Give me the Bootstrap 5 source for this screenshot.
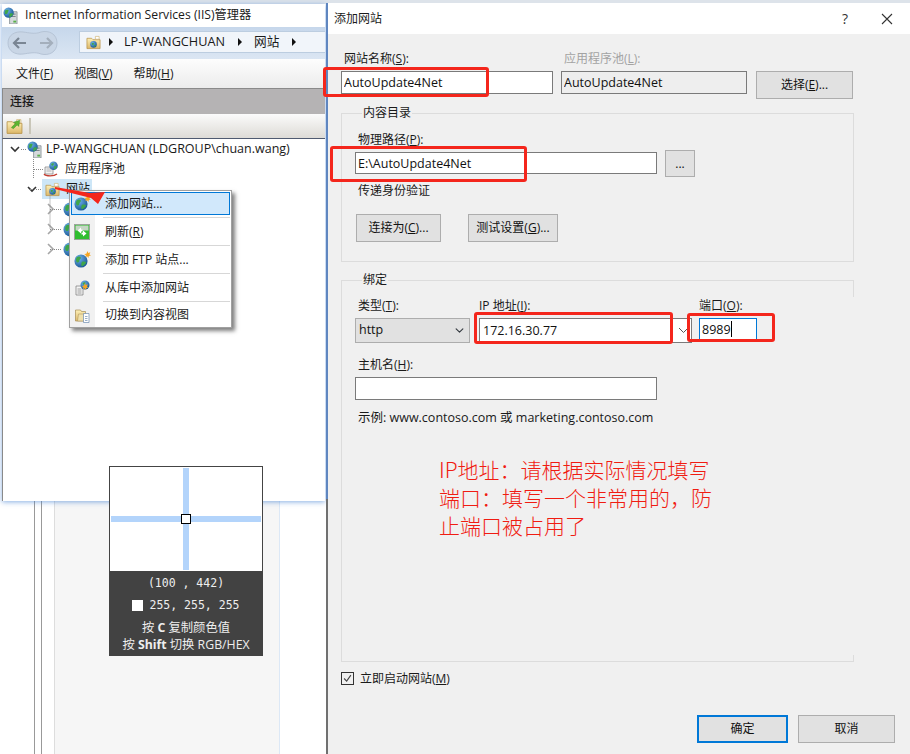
<!DOCTYPE html>
<html lang="zh-CN">
<head>
  <meta charset="UTF-8">
  <title>添加网站</title>
  <link href="https://cdn.jsdelivr.net/npm/bootstrap@5.3.0/dist/css/bootstrap.min.css" rel="stylesheet">
  <style>
    html, body { margin: 0; width: 910px; height: 754px; overflow: hidden; }
    body { font-family: "Open Sans", "Noto Sans CJK SC", sans-serif; font-size: 12px; color: #1a1a1a; background: #fff; }
    .desk { position: relative; width: 910px; height: 754px; overflow: hidden; }
    u { text-underline-offset: 1px; }
    .latin-run { font-size: 12.5px; }

    /* what shows behind the two windows */
    .back-layer { position: absolute; inset: 0; background: #fff; }
    .back-top { height: 4px; background: #dde3ea; }
    .back-col-a { width: 34px; }
    .back-col-b { width: 7px; border-left: 1px solid #999; }
    .back-col-c { width: 13px; border-left: 1px solid #999; }
    .back-col-d { width: 226px; background: #f6f6f6; border-left: 1px solid #ddd; border-right: 1px solid #dce8f6; }
    .back-col-e { flex: 1; background: linear-gradient(90deg, #fff 60%, #e4e4e4 92%, #999); }

    /* IIS manager */
    .iis-win { position: absolute; left: 2px; top: 4px; width: 323px; height: 497px; background: #fff; box-shadow: 0 1px 5px rgba(70,130,210,.65); }
    .iis-title { height: 23px; padding-left: 1px; gap: 7px; font-size: 12.2px; }
    .iis-nav { height: 32px; background: linear-gradient(#c6d7eb, #dbe6f3); padding-left: 3px; }
    .crumb-box { margin-left: 19px; flex: 1; height: 22px; margin-top: -2px; background: #f1f5fa; border: 1px solid #bccde0; border-right: 0; padding-left: 6px; font-size: 12.7px; }
    .crumb-sep { width: 0; height: 0; border-left: 4px solid #111; border-top: 4px solid transparent; border-bottom: 4px solid transparent; margin: 0 12px 0 13px; }
    .crumb-sep.is-first { margin: 0 11px 0 8px; }
    .iis-menu { height: 29px; background: linear-gradient(#fdfdfd, #ececec); padding-left: 14px; gap: 21px; }
    .conn-head { height: 26px; background: #b5b3b4; padding-left: 7px; font-weight: 500; border-top: 1px solid #8a8a8a; border-left: 1px solid #8a8a8a; }
    .conn-tools { height: 25px; padding-left: 3px; background: linear-gradient(#fbfbfb, #dddbd6); border-bottom: 1px solid #4f5a70; gap: 6px; border-left: 1px solid #8a8a8a; }
    .tool-bar-line { width: 2px; height: 16px; background: #c9c6b8; }
    .tree-pane { position: relative; flex: 1; border-left: 1px solid #8a8a8a; }
    .tree-row { height: 20px; }
    .tree-chev { width: 12px; flex: none; }
    .tree-lv0 { padding-left: 6px; }
    .tree-lv1 { padding-left: 40px; }
    .tree-lv1b { padding-left: 23px; }
    .tree-lv2 { padding-left: 42px; }
    .tree-sel { background: #cde6f7; width: 50px; height: 20px; margin-left: 4px; padding-left: 3px; }
    .tree-dots { position: absolute; left: 0; top: 0; pointer-events: none; }
    .icon-gap { margin-left: 6px; }
    .text-gap { margin-left: 6px; }

    /* context menu */
    .ctx-menu { position: absolute; left: 69px; top: 190px; width: 163px; height: 138px; background: linear-gradient(90deg, #f1f1f1 25px, #fff 25px); border: 1px solid #a0a0a0; box-shadow: 3px 3px 4px rgba(0,0,0,.5); padding: 1px; }
    .ctx-row { height: 27px; padding-left: 3px; gap: 14px; }
    .ctx-row:last-child { height: 25px; }
    .ctx-row.is-hot { height: 23px; background: #d1e8fb; border: 1px solid #0078d7; padding-left: 2px; margin-bottom: 2px; }
    .ctx-rule { height: 1px; background: #d7d7d7; margin-left: 32px; }
    .ctx-icon { width: 17px; flex: none; }
    .red-arrow { position: absolute; left: 0; top: 0; pointer-events: none; }

    /* colour picker loupe */
    .loupe { position: absolute; left: 109px; top: 466px; width: 154px; height: 190px; }
    .loupe-view { position: relative; height: 105px; background: #fff; border: 1px solid #444; border-bottom: 0; }
    .loupe-v { position: absolute; left: 73px; top: 1px; width: 6px; height: 102px; background: #b3d4fb; }
    .loupe-h { position: absolute; left: 1px; top: 49px; width: 150px; height: 6px; background: #b3d4fb; }
    .loupe-c { position: absolute; left: 71px; top: 47px; width: 10px; height: 10px; background: #fff; border: 1px solid #000; }
    .loupe-info { height: 85px; background: #424242; color: #eee; font-size: 12.3px; text-align: center; padding-top: 4px; }
    .loupe-mono { font-family: "DejaVu Sans Mono", monospace; font-size: 11.5px; height: 22px; line-height: 16px; }
    .loupe-swatch { width: 11px; height: 11px; background: #fff; margin: 3px 6px 0 0; }
    .loupe-hint { height: 17px; line-height: 17px; }

    /* add site dialog */
    .site-dlg { position: absolute; left: 326px; top: 3px; width: 584px; height: 751px; background: #f0f0f0; border-left: 2px solid; border-image: linear-gradient(#5f86c0 66%, #707070 66%) 1; }
    .dlg-head { height: 31px; background: #fff; padding: 0 17px 0 6px; }
    .dlg-help { font-size: 14px; margin-right: 33px; color: #333; }
    .dlg-pane { flex: 1; padding: 16px 15px 11px 13px; }
    .fld-label { height: 21px; line-height: 18px; padding-left: 3px; white-space: nowrap; }
    .is-muted { color: #a3a3a3; }
    .win-input.form-control { height: 23px; border-radius: 0; border: 1px solid #7a7a7a; padding: 0 2px; font-size: 12.5px; color: #111; background: #fff; box-shadow: none; }
    .win-input.is-grey.form-control { background: #eee; }
    .win-btn.btn { height: 28px; border-radius: 0; border: 1px solid #adadad; background: #e1e1e1; color: #111; font-size: 12px; padding: 0; line-height: 26px; }
    .w-name { width: 212px; }
    .w-pool { width: 186px; margin-left: 8px; }
    .w-pick { width: 97px; margin: 21px 0 0 9px; }
    .grp-box { position: relative; width: 513px; border: 1px solid #dcdcdc; padding: 9px 0 19px 13px; margin: 5px 0 0 0; min-width: 0; }
    .grp-box legend { float: none; width: auto; font-size: 12px; line-height: 18px; margin: 0 0 0 7px; padding: 0 1px; }
    .grp-bind { height: 391px; margin-top: 9px; padding: 8px 0 0 13px; border-right: 0; background-image: linear-gradient(#dcdcdc, #dcdcdc), linear-gradient(#dcdcdc, #dcdcdc); background-repeat: no-repeat; background-origin: border-box; background-size: 1px 17px, 1px 7px; background-position: right 0 top 0, right 0 bottom 0; }
    .w-path { width: 302px; }
    .win-input.w-path.form-control, .win-input.w-port.form-control { height: 22px; }
    .win-input.w-host.form-control { width: 302px; height: 23px; }
    .w-dots.btn { width: 30px; height: 27px; margin: -2px 0 0 8px; }
    .pass-note { height: 18px; line-height: 18px; margin: 5px 0 14px 3px; }
    .w-conn { width: 85px; margin-left: 1px; }
    .w-test { width: 90px; margin-left: 27px; }
    .w-type { width: 115px; }
    .win-select.form-select { height: 25px; border-radius: 0; border: 1px solid #adadad; background-color: #e1e1e1; font-size: 12.5px; padding: 0 0 0 3px; color: #111; background-position: right 4px center; background-size: 11px 9px; box-shadow: none; }
    .w-ip { width: 213px; margin-left: 9px; }
    .ip-combo { height: 25px; border: 1px solid #7a7a7a; background: #fff; }
    .ip-combo input { width: 190px; height: 23px; border: 0; outline: 0; background: #fff; padding: 0 3px; font-size: 12.5px; color: #111; }
    .ip-combo svg { margin-left: 8px; }
    .w-port { width: 58px; margin-left: 7px; }
    .win-input.w-port.form-control { border-color: #0078d7; padding-left: 2px; }
    .caret-mark { position: absolute; left: 731px; top: 321px; width: 1px; height: 16px; background: #000; }
    .host-label { margin-top: 13px; }
    .eg-note { height: 18px; line-height: 18px; margin: 9px 0 0 3px; font-size: 12.5px; }
    .start-row.form-check { margin: 10px 0 0 0; min-height: 0; height: 13px; gap: 6px; white-space: nowrap; }
    .start-row .form-check-input { width: 13px; height: 13px; margin: 0; border-radius: 0; border: 1px solid #333; background-color: #f0f0f0; flex: none; box-shadow: none; background-image: url("data:image/svg+xml,%3csvg xmlns='http://www.w3.org/2000/svg' viewBox='0 0 13 13'%3e%3cpath d='M2.5 6.5l3 3 5-7' fill='none' stroke='%23444' stroke-width='1.3'/%3e%3c/svg%3e"); }
    .dlg-foot { margin-top: auto; gap: 10px; }
    .w-ok.btn { width: 91px; border: 2px solid #0078d7; line-height: 24px; }
    .w-cancel.btn { width: 97px; }

    /* red marks drawn on top of the screenshot */
    .red-box { position: absolute; border: 3px solid #f4261c; border-radius: 3px; pointer-events: none; }
    .rb-name { left: 323px; top: 67px; width: 166px; height: 30px; }
    .rb-path { left: 330px; top: 146px; width: 197px; height: 36px; }
    .rb-ip { left: 474px; top: 312px; width: 199px; height: 32px; }
    .rb-port { left: 687px; top: 313px; width: 88px; height: 29px; }
    .red-note { position: absolute; left: 439px; top: 455px; width: 290px; color: #f01c12; font-size: 21px; line-height: 28px; white-space: nowrap; font-family: "Noto Sans CJK SC", sans-serif; font-weight: 300; }
  </style>
</head>
<body>
  <svg width="0" height="0" style="position:absolute">
    <defs>
      <linearGradient id="fold" x1="0" y1="0" x2="0" y2="1"><stop offset="0" stop-color="#fdf0b8"/><stop offset="1" stop-color="#dcb768"/></linearGradient>
      <radialGradient id="sea" cx=".35" cy=".3" r=".8"><stop offset="0" stop-color="#6fb2ea"/><stop offset="1" stop-color="#12508f"/></radialGradient>
      <symbol id="globe" viewBox="0 0 16 16">
        <circle cx="8" cy="8" r="7.500" fill="url(#sea)"/>
        <path d="M3 4c2-2 4-1 5 0 0 2-2 2-2 4s-2 2-3 1-1-3 0-5zM9 9c2-1 4 0 5 0-1 3-3 4-5 5-1-2-1-3 0-5z" fill="#3fa64a"/>
      </symbol>
      <symbol id="folder" viewBox="0 0 16 16">
        <path d="M1 3.500h5l1.500 1.500h7.500v9.500h-14z" fill="url(#fold)" stroke="#b8934a" stroke-width=".8"/>
        <path d="M10 1.500h4v3h-4z" fill="#fff" stroke="#c9a95f" stroke-width=".6"/>
      </symbol>
      <symbol id="site-folder" viewBox="0 0 16 16">
        <use href="#folder"/>
        <circle cx="8" cy="10" r="3.500" fill="url(#sea)"/>
        <path d="M6 9c1-1 2-1 2.500 0 0 1-1 2-2 1.500zM8.500 11c1-.5 1.500 0 2 0-.5 1-1 1.500-2 1.500z" fill="#3fa64a"/>
      </symbol>
      <symbol id="server" viewBox="0 0 16 18">
        <path d="M7 5h8v13h-8z" fill="#d5d9dc" stroke="#6f7a80" stroke-width=".7"/>
        <path d="M8.500 7.500h5M8.500 10h5" stroke="#6f7a80"/>
        <rect x="11" y="14.500" width="3" height="2" fill="#5ab04a"/>
        <circle cx="6" cy="6" r="5.500" fill="url(#sea)"/>
        <path d="M2 4c2-2 3-1 4-1 0 2-1 2-1 3s-2 2-3 1zM7 7c2-1 3 0 4 0-1 2-2 3-4 4-.5-2-.5-3 0-4z" fill="#3fa64a"/>
      </symbol>
      <symbol id="pool" viewBox="0 0 16 16">
        <path d="M2 6h8v7h-8z" fill="#f2f2f2" stroke="#7d7d7d" stroke-width=".7"/>
        <path d="M3.500 8h5M3.500 10h5" stroke="#9a9a9a" stroke-width=".7"/>
        <circle cx="10.500" cy="4.800" r="4.300" fill="url(#sea)"/>
        <path d="M8 3c1-1 2-1 3-.5 0 1-1 2-2 2.500zM11 5.500c1-.5 2 0 3 0-.5 1.500-1.500 2.500-3 3z" fill="#3fa64a"/>
        <path d="M1 13c2 2.500 10 2.500 13 0" fill="none" stroke="#c33c30" stroke-width="1.300"/>
      </symbol>
      <symbol id="refresh" viewBox="0 0 16 16">
        <rect x=".5" y=".5" width="15" height="15" fill="#2fbe2f" stroke="#9aa59a"/>
        <rect x="1.500" y="1.500" width="13" height="5" fill="#c4d6c4"/>
        <path d="M7 3.500L3.500 6.500 7 9.500V7.500h1.500v-2H7zM9 12.500l3.500-3L9 6.500v2H7.500v2H9z" fill="#fff"/>
      </symbol>
      <symbol id="spark" viewBox="0 0 8 8">
        <path d="M4 0l.9 2.300 2.300-.9-1 2.600 1.800 1-2.500.6-.4 2.400-1.600-1.900-1.900 1.100.6-2.400-2-1.400 2.500-.3z" fill="#f5a623"/>
      </symbol>
      <symbol id="docs-globe" viewBox="0 0 16 16">
        <path d="M1.500 6h7v9h-7z" fill="#f4f4f4" stroke="#777" stroke-width=".7"/>
        <path d="M3 9h4M3 11h4M3 13h4" stroke="#777" stroke-width=".7"/>
        <circle cx="10.500" cy="5" r="4.500" fill="url(#sea)"/>
        <path d="M8 3c1-1 2-1 3-.5 0 1-1 2-2 2.500z" fill="#3fa64a"/>
      </symbol>
      <symbol id="folder-doc" viewBox="0 0 16 16">
        <path d="M1 14V3h5l1 1.500h4V14z" fill="url(#fold)" stroke="#a68d55" stroke-width=".7"/>
        <path d="M3 14l1-7h7l-1 7z" fill="#efe0ab" stroke="#a68d55" stroke-width=".5"/>
        <path d="M9 6.500h5.500v9h-5.500z" fill="#fff" stroke="#6e8cb0" stroke-width=".7"/>
        <path d="M10.500 9.500h2.500M10.500 11.500h2.500M10.500 13.500h2.500" stroke="#6e8cb0" stroke-width=".7"/>
      </symbol>
    </defs>
  </svg>

  <div class="desk">
    <div class="back-layer d-flex flex-column">
      <div class="back-top"></div>
      <div class="d-flex flex-grow-1">
        <div class="back-col-a"></div>
        <div class="back-col-b"></div>
        <div class="back-col-c"></div>
        <div class="back-col-d"></div>
        <div class="back-col-e"></div>
      </div>
    </div>

    <div class="iis-win d-flex flex-column">
      <div class="iis-title d-flex align-items-center">
        <svg width="15" height="17"><use href="#server"/></svg>
        <span>Internet Information Services (IIS)管理器</span>
      </div>
      <div class="iis-nav d-flex align-items-center">
        <svg width="55" height="28" viewBox="0 0 55 28">
          <path d="M3 14C3 6 10 2 18 3c6 .7 12 2.500 18 0 8-2 16 2 16 11s-8 13-16 11c-6-2.500-12-.7-18 0C10 26 3 22 3 14z" fill="#c9d6e6" stroke="#b6c4d6"/>
          <path d="M21 14H9M14 9l-5 5 5 5" fill="none" stroke="#7a8694" stroke-width="2.200"/>
          <path d="M35 14h12M42 9l5 5-5 5" fill="none" stroke="#a4afbc" stroke-width="2.200"/>
        </svg>
        <div class="crumb-box d-flex align-items-center">
          <svg width="15" height="15"><use href="#site-folder"/></svg>
          <span class="crumb-sep is-first"></span>
          <span>LP-WANGCHUAN</span>
          <span class="crumb-sep"></span>
          <span>网站</span>
          <span class="crumb-sep"></span>
        </div>
      </div>
      <div class="iis-menu d-flex align-items-center">
        <span>文件(<u>F</u>)</span>
        <span>视图(<u>V</u>)</span>
        <span>帮助(<u>H</u>)</span>
      </div>
      <div class="conn-head d-flex align-items-center">连接</div>
      <div class="conn-tools d-flex align-items-center">
        <svg width="17" height="17" viewBox="0 0 16 16">
          <use href="#folder"/>
          <path d="M5 9l4-4-2-1 6-2-1 6-1.500-1.500-3.500 3.500z" fill="#5cb531" stroke="#3c8a1d" stroke-width=".4"/>
        </svg>
        <span class="tool-bar-line"></span>
      </div>
      <div class="tree-pane">
        <svg class="tree-dots" width="120" height="130">
          <path d="M18 10.500h5M30.500 20v20M31 30.500h10M47 50.500v40M47 70.500h12M47 90.500h12M47 110.500h12M27 50.500h12" stroke="#888" stroke-dasharray="1 1" fill="none"/>
        </svg>
        <div class="tree-row d-flex align-items-center tree-lv0">
          <svg class="tree-chev" width="12" height="10" viewBox="0 0 12 10"><path d="M2 3l4 4 4-4" fill="none" stroke="#333" stroke-width="1.600"/></svg>
          <svg width="15" height="17" class="icon-gap"><use href="#server"/></svg>
          <span class="ms-1 latin-run">LP-WANGCHUAN (LDGROUP\chuan.wang)</span>
        </div>
        <div class="tree-row d-flex align-items-center tree-lv1">
          <svg width="16" height="16"><use href="#pool"/></svg>
          <span class="text-gap">应用程序池</span>
        </div>
        <div class="tree-row d-flex align-items-center tree-lv1b">
          <svg class="tree-chev" width="12" height="10" viewBox="0 0 12 10"><path d="M2 3l4 4 4-4" fill="none" stroke="#333" stroke-width="1.600"/></svg>
          <div class="tree-sel d-flex align-items-center">
            <svg width="15" height="15"><use href="#site-folder"/></svg>
            <span class="text-gap">网站</span>
          </div>
        </div>
        <div class="tree-row d-flex align-items-center tree-lv2">
          <svg class="tree-chev" width="12" height="12" viewBox="0 0 12 12"><path d="M3 1l5 5-5 5" fill="none" stroke="#a6a6a6" stroke-width="1.600"/></svg>
          <svg width="15" height="15" class="icon-gap"><use href="#globe"/></svg>
        </div>
        <div class="tree-row d-flex align-items-center tree-lv2">
          <svg class="tree-chev" width="12" height="12" viewBox="0 0 12 12"><path d="M3 1l5 5-5 5" fill="none" stroke="#a6a6a6" stroke-width="1.600"/></svg>
          <svg width="15" height="15" class="icon-gap"><use href="#globe"/></svg>
        </div>
        <div class="tree-row d-flex align-items-center tree-lv2">
          <svg class="tree-chev" width="12" height="12" viewBox="0 0 12 12"><path d="M3 1l5 5-5 5" fill="none" stroke="#a6a6a6" stroke-width="1.600"/></svg>
          <svg width="15" height="15" class="icon-gap"><use href="#globe"/></svg>
        </div>
      </div>
    </div>

    <div class="ctx-menu">
      <div class="ctx-row is-hot d-flex align-items-center">
        <svg class="ctx-icon" height="17" viewBox="0 0 17 17"><use href="#globe" y="2" width="14" height="14"/><use href="#spark" x="10" width="7" height="7"/></svg>
        <span>添加网站...</span>
      </div>
      <div class="ctx-rule"></div>
      <div class="ctx-row d-flex align-items-center">
        <svg class="ctx-icon" height="16"><use href="#refresh" width="16" height="16"/></svg>
        <span>刷新(<u>R</u>)</span>
      </div>
      <div class="ctx-rule"></div>
      <div class="ctx-row d-flex align-items-center">
        <svg class="ctx-icon" height="17" viewBox="0 0 17 17"><use href="#globe" y="3" width="14" height="14"/><use href="#spark" x="10" width="7" height="7"/></svg>
        <span>添加 FTP 站点...</span>
      </div>
      <div class="ctx-rule"></div>
      <div class="ctx-row d-flex align-items-center">
        <svg class="ctx-icon" height="16" viewBox="0 0 16 16"><use href="#docs-globe"/><use href="#spark" x="7" y="3" width="7" height="7"/></svg>
        <span>从库中添加网站</span>
      </div>
      <div class="ctx-rule"></div>
      <div class="ctx-row d-flex align-items-center">
        <svg class="ctx-icon" height="16"><use href="#folder-doc"/></svg>
        <span>切换到内容视图</span>
      </div>
    </div>

    <svg class="red-arrow" width="120" height="220">
      <path d="M55 187l35 6 15-1-7 12-7-6-36-9z" fill="#f4261c"/>
    </svg>

    <div class="loupe">
      <div class="loupe-view">
        <span class="loupe-v"></span>
        <span class="loupe-h"></span>
        <span class="loupe-c"></span>
      </div>
      <div class="loupe-info">
        <div class="loupe-mono">(100 , 442)</div>
        <div class="loupe-mono d-flex justify-content-center"><span class="loupe-swatch"></span>255, 255, 255</div>
        <div class="loupe-hint">按 <b>C</b> 复制颜色值</div>
        <div class="loupe-hint">按 <b>Shift</b> 切换 RGB/HEX</div>
      </div>
    </div>

    <div class="site-dlg d-flex flex-column">
      <div class="dlg-head d-flex align-items-center">
        <span class="flex-grow-1">添加网站</span>
        <span class="dlg-help">?</span>
        <svg width="12" height="12" viewBox="0 0 12 12"><path d="M1 1l10 10M11 1L1 11" stroke="#333" stroke-width="1.100"/></svg>
      </div>
      <div class="dlg-pane d-flex flex-column">
        <div class="d-flex align-items-start">
          <div class="w-name">
            <div class="fld-label">网站名称(<u>S</u>):</div>
            <input class="form-control win-input" value="AutoUpdate4Net">
          </div>
          <div class="w-pool">
            <div class="fld-label is-muted">应用程序池(<u>L</u>):</div>
            <input class="form-control win-input is-grey" value="AutoUpdate4Net" readonly>
          </div>
          <button class="btn win-btn w-pick">选择(<u>E</u>)...</button>
        </div>

        <fieldset class="grp-box">
          <legend>内容目录</legend>
          <div class="fld-label">物理路径(<u>P</u>):</div>
          <div class="d-flex align-items-start">
            <input class="form-control win-input w-path" value="E:\AutoUpdate4Net">
            <button class="btn win-btn w-dots">...</button>
          </div>
          <div class="pass-note">传递身份验证</div>
          <div class="d-flex">
            <button class="btn win-btn w-conn">连接为(<u>C</u>)...</button>
            <button class="btn win-btn w-test">测试设置(<u>G</u>)...</button>
          </div>
        </fieldset>

        <fieldset class="grp-box grp-bind">
          <legend>绑定</legend>
          <div class="d-flex align-items-start">
            <div class="w-type">
              <div class="fld-label">类型(<u>T</u>):</div>
              <select class="form-select win-select"><option>http</option></select>
            </div>
            <div class="w-ip">
              <div class="fld-label ps-0">IP 地址(<u>I</u>):</div>
              <div class="ip-combo d-flex align-items-center">
                <input value="172.16.30.77">
                <svg width="11" height="7" viewBox="0 0 11 7"><path d="M1 1l4.500 4.500L10 1" fill="none" stroke="#555"/></svg>
              </div>
            </div>
            <div class="w-port">
              <div class="fld-label ps-0">端口(<u>O</u>):</div>
              <input class="form-control win-input w-port m-0 w-100" value="8989">
            </div>
          </div>
          <div class="fld-label host-label">主机名(<u>H</u>):</div>
          <input class="form-control win-input w-host" value="">
          <div class="eg-note">示例: www.contoso.com 或 marketing.contoso.com</div>
        </fieldset>

        <div class="start-row form-check d-flex align-items-center p-0">
          <input class="form-check-input" type="checkbox" id="startNow" checked>
          <label for="startNow">立即启动网站(<u>M</u>)</label>
        </div>

        <div class="dlg-foot d-flex justify-content-end">
          <button class="btn win-btn w-ok">确定</button>
          <button class="btn win-btn w-cancel">取消</button>
        </div>
      </div>
    </div>

    <span class="caret-mark"></span>
    <div class="red-box rb-name"></div>
    <div class="red-box rb-path"></div>
    <div class="red-box rb-ip"></div>
    <div class="red-box rb-port"></div>
    <div class="red-note">
      IP地址：请根据实际情况填写<br>
      端口：填写一个非常用的，防<br>
      止端口被占用了
    </div>
  </div>

  <script src="https://cdn.jsdelivr.net/npm/bootstrap@5.3.0/dist/js/bootstrap.bundle.min.js"></script>
</body>
</html>
